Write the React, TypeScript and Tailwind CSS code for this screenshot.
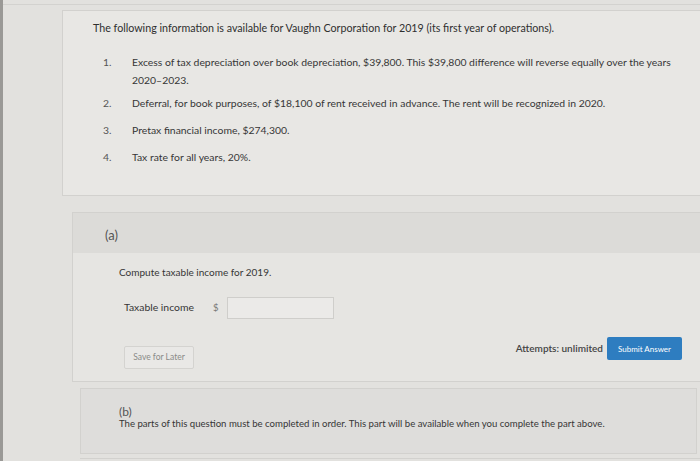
import React from "react";

const items = [
  {
    n: "1.",
    text: "Excess of tax depreciation over book depreciation, $39,800. This $39,800 difference will reverse equally over the years 2020–2023.",
    cls: "",
  },
  {
    n: "2.",
    text: "Deferral, for book purposes, of $18,100 of rent received in advance. The rent will be recognized in 2020.",
    cls: "-mt-[4px]",
  },
  { n: "3.", text: "Pretax financial income, $274,300.", cls: "" },
  { n: "4.", text: "Tax rate for all years, 20%.", cls: "" },
];

export default function App() {
  return (
    <div
      className="relative h-[461px] w-[700px] overflow-hidden bg-[#e2e1de] text-[#363636]"
      style={{ fontFamily: "Lato, 'Open Sans', sans-serif" }}
    >
      <div className="absolute left-0 top-0 h-full w-[3px] bg-[#9a9996]" />
      <div className="h-[5px] border-b border-[#d3d2cf]" />

      {/* intro card */}
      <div className="ml-[62px] mt-[5px] h-[186px] border border-r-0 border-[#d2d1ce] bg-[#e8e7e4] pl-[30px] pt-[10px]">
        <p className="text-[10.7px] leading-[14px] text-[#2f2f2f]">
          The following information is available for Vaughn Corporation for 2019 (its first year of operations).
        </p>
        <ol className="mt-[18px] flex flex-col gap-[9px] pl-[10px] pr-[20px]">
          {items.map((it) => (
            <li key={it.n} className={`flex text-[10.4px] leading-[18px] ${it.cls}`}>
              <span className="w-[29px] shrink-0 text-[#555]">{it.n}</span>
              <span className="max-w-[550px]">{it.text}</span>
            </li>
          ))}
        </ol>
      </div>

      {/* part (a) */}
      <div className="ml-[72px] mt-[16px] border border-r-0 border-[#d2d1ce] bg-[#e6e5e2]">
        <div className="flex h-[40px] items-center bg-[#dcdbd8] pl-[32px] pt-[6px] text-[13px] text-[#555]">
          (a)
        </div>
        <div className="h-[128px] pl-[46px] pr-[18px] pt-[12px]">
          <p className="text-[10px] leading-[14px]">Compute taxable income for 2019.</p>
          <div className="mt-[18px] flex items-center">
            <span className="w-[94px] pl-[5px] text-[10.4px]">Taxable income</span>
            <span className="w-[14px] text-[9.6px] text-[#777]">$</span>
            <div className="h-[22px] w-[107px] border border-[#cfcecb] bg-[#ebeae8]" />
          </div>
          <div className="mt-[18px] flex items-start justify-between">
            <button className="mt-[9px] ml-[5px] h-[23px] w-[70px] rounded-[2px] border border-[#d4d3d0] bg-[#e9e8e6] text-[8.5px] text-[#8a8a88]">
              Save for Later
            </button>
            <div className="flex items-center gap-[4px]">
              <span className="text-[10px] font-semibold text-[#444]">Attempts: unlimited</span>
              <button className="h-[23px] w-[75px] rounded-[2px] bg-[#2e7dc0] text-[8px] text-white">
                Submit Answer
              </button>
            </div>
          </div>
        </div>
      </div>

      {/* part (b) */}
      <div className="ml-[80px] mr-[3px] mt-[6px] h-[66px] border border-[#d2d1ce] bg-[#dedddb] pl-[38px] pt-[17px]">
        <p className="text-[12px] leading-[12px] text-[#555]">(b)</p>
        <p className="text-[9.6px] leading-[11px]">
          The parts of this question must be completed in order. This part will be available when you complete the part above.
        </p>
      </div>
      <div className="mt-[4px] ml-[80px] border-t border-[#d2d1ce]" />
    </div>
  );
}
